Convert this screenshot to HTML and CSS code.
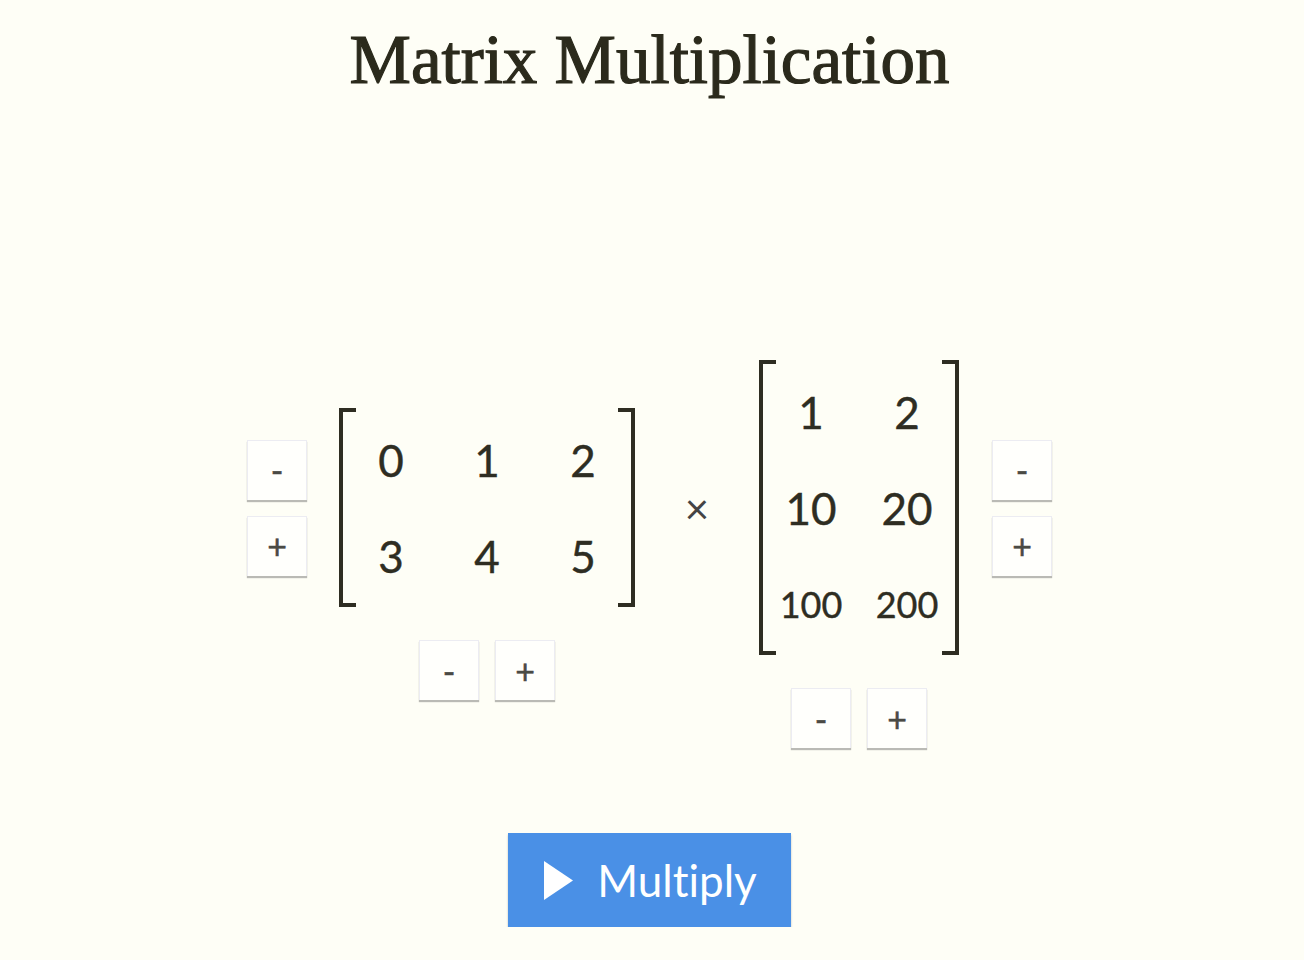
FILE: index.html
```html
<!DOCTYPE html>
<html>
<head>
<meta charset="utf-8">
<title>Matrix Multiplication</title>
<link rel="stylesheet" href="styles.css">
</head>
<body>
<h1 class="title">Matrix Multiplication</h1>
<div class="stage">
  <div class="btn-stack rows-a">
    <button class="step">-</button>
    <button class="step">+</button>
  </div>
  <div class="matrix-col">
    <div class="matrix cols-3">
      <span class="cell">0</span><span class="cell">1</span><span class="cell">2</span>
      <span class="cell">3</span><span class="cell">4</span><span class="cell">5</span>
    </div>
    <div class="btn-row">
      <button class="step">-</button>
      <button class="step">+</button>
    </div>
  </div>
  <div class="times">×</div>
  <div class="matrix-col">
    <div class="matrix cols-2">
      <span class="cell">1</span><span class="cell">2</span>
      <span class="cell">10</span><span class="cell">20</span>
      <span class="cell small">100</span><span class="cell small">200</span>
    </div>
    <div class="btn-row">
      <button class="step">-</button>
      <button class="step">+</button>
    </div>
  </div>
  <div class="btn-stack rows-b">
    <button class="step">-</button>
    <button class="step">+</button>
  </div>
</div>
<div class="action">
  <button class="multiply">
    <svg class="play" width="29" height="39" viewBox="0 0 29 39"><polygon points="0,0 29,19.5 0,39" fill="#ffffff"/></svg>
    <span>Multiply</span>
  </button>
</div>
</body>
</html>
```
FILE: styles.css
```css
html, body {
  margin: 0;
  background: #fefef6;
}
body {
  padding-right: 5px;
  color: #2e2d22;
  font-family: Lato, "DejaVu Sans", sans-serif;
  font-variant-ligatures: none;
}
.title {
  margin: 0;
  padding-top: 22px;
  text-align: center;
  font-family: "Liberation Serif", serif;
  font-weight: normal;
  font-size: 69px;
  line-height: 76px;
  color: #2b2a1c;
  -webkit-text-stroke: 1.2px #2b2a1c;
}
.stage {
  margin-top: 169px;
  display: flex;
  justify-content: center;
  align-items: center;
}
.btn-stack {
  display: flex;
  flex-direction: column;
  gap: 16px;
}
.rows-a { margin-right: 32px; }
.rows-b { margin-left: 33px; }
.step {
  box-sizing: border-box;
  width: 60px;
  height: 60px;
  padding: 0;
  border: 1px solid #ececf2;
  border-bottom: none;
  background: #fffffc;
  box-shadow: 0 2px 1px rgba(60, 60, 60, 0.35);
  font-family: Lato, sans-serif;
  font-size: 34px;
  line-height: 1;
  color: #4a4a44;
  -webkit-text-stroke: 0.5px #4a4a44;
  cursor: pointer;
}
.matrix-col {
  display: flex;
  flex-direction: column;
  align-items: center;
  padding-top: 93px;
}
.matrix {
  display: grid;
  grid-auto-rows: 96px;
  padding: 4px 4px 3px;
  background:
    linear-gradient(#2e2d22, #2e2d22) left top / 4px 100% no-repeat,
    linear-gradient(#2e2d22, #2e2d22) left top / 17px 4px no-repeat,
    linear-gradient(#2e2d22, #2e2d22) left bottom / 17px 4px no-repeat,
    linear-gradient(#2e2d22, #2e2d22) right top / 4px 100% no-repeat,
    linear-gradient(#2e2d22, #2e2d22) right top / 17px 4px no-repeat,
    linear-gradient(#2e2d22, #2e2d22) right bottom / 17px 4px no-repeat;
}
.cols-3 { grid-template-columns: repeat(3, 96px); }
.cols-2 { grid-template-columns: repeat(2, 96px); }
.cell {
  display: flex;
  align-items: center;
  justify-content: center;
  font-size: 44px;
  -webkit-text-stroke: 0.4px #2e2d22;
}
.cell.small { font-size: 36px; }
.btn-row {
  display: flex;
  gap: 16px;
  margin-top: 33px;
}
.times {
  width: 124px;
  text-align: center;
  font-size: 42px;
  color: #444;
}
.action {
  margin-top: 85px;
  display: flex;
  justify-content: center;
}
.multiply {
  width: 283px;
  height: 94px;
  display: flex;
  align-items: center;
  justify-content: center;
  gap: 24px;
  padding: 0 0 0 2px;
  border: none;
  background: #4a90e6;
  box-shadow: 0 2px 2px rgba(60, 60, 60, 0.3);
  color: #ffffff;
  font-family: Lato, sans-serif;
  font-variant-ligatures: none;
  font-size: 44px;
  cursor: pointer;
}
.play { display: block; }
```
